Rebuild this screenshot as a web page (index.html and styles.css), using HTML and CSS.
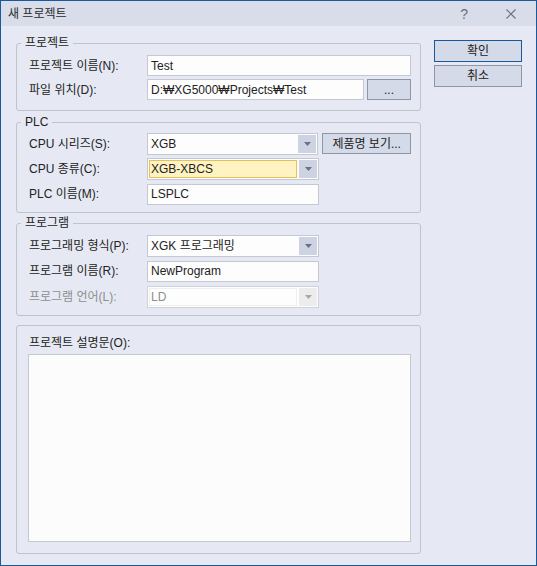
FILE: index.html
```html
<!DOCTYPE html>
<html lang="ko">
<head>
<meta charset="utf-8">
<title>새 프로젝트</title>
<link rel="stylesheet" href="styles.css">
</head>
<body>
<div class="window">
  <div class="titlebar">
    <span class="title">새 프로젝트</span>
    <span class="help">?</span>
    <svg class="close" width="10" height="10" viewBox="0 0 10 10"><path d="M0.5 0.5 L9.5 9.5 M9.5 0.5 L0.5 9.5" stroke="#6a6f78" stroke-width="1.1" fill="none"/></svg>
  </div>
  <div class="content">
    <div class="left">
      <div class="group g1">
        <span class="group-title">프로젝트</span>
        <div class="row">
          <span class="label">프로젝트 이름(N):</span>
          <input class="edit wide" type="text" value="Test">
        </div>
        <div class="row r2">
          <span class="label">파일 위치(D):</span>
          <input class="edit path" type="text" value="D:₩XG5000₩Projects₩Test">
          <button class="btn browse">...</button>
        </div>
      </div>

      <div class="group g2">
        <span class="group-title">PLC</span>
        <div class="row">
          <span class="label">CPU 시리즈(S):</span>
          <div class="combo"><span class="combo-text">XGB</span><span class="combo-btn"><svg width="7" height="4" viewBox="0 0 7 4"><path d="M0 0 H7 L3.5 4 Z" fill="#6c7282"/></svg></span></div>
          <button class="btn product">제품명 보기...</button>
        </div>
        <div class="row r2">
          <span class="label">CPU 종류(C):</span>
          <div class="combo"><span class="combo-text focused">XGB-XBCS</span><span class="combo-btn"><svg width="7" height="4" viewBox="0 0 7 4"><path d="M0 0 H7 L3.5 4 Z" fill="#6c7282"/></svg></span></div>
        </div>
        <div class="row r3">
          <span class="label">PLC 이름(M):</span>
          <input class="edit mid" type="text" value="LSPLC">
        </div>
      </div>

      <div class="group g3">
        <span class="group-title">프로그램</span>
        <div class="row">
          <span class="label">프로그래밍 형식(P):</span>
          <div class="combo"><span class="combo-text">XGK 프로그래밍</span><span class="combo-btn"><svg width="7" height="4" viewBox="0 0 7 4"><path d="M0 0 H7 L3.5 4 Z" fill="#6c7282"/></svg></span></div>
        </div>
        <div class="row r2">
          <span class="label">프로그램 이름(R):</span>
          <input class="edit mid" type="text" value="NewProgram">
        </div>
        <div class="row r3b">
          <span class="label disabled">프로그램 언어(L):</span>
          <div class="combo disabled"><span class="combo-text">LD</span><span class="combo-btn"><svg width="7" height="4" viewBox="0 0 7 4"><path d="M0 0 H7 L3.5 4 Z" fill="#a8a8a8"/></svg></span></div>
        </div>
      </div>

      <div class="group g4">
        <div class="desc-label">프로젝트 설명문(O):</div>
        <textarea class="desc"></textarea>
      </div>
    </div>
    <div class="right">
      <button class="btn action default">확인</button>
      <button class="btn action">취소</button>
    </div>
  </div>
</div>
</body>
</html>
```

FILE: styles.css
```css
* { box-sizing: border-box; }
html, body { margin: 0; padding: 0; }
body {
  width: 537px;
  height: 566px;
  font-family: "Liberation Sans", "Noto Sans CJK KR", sans-serif;
  font-size: 12px;
  color: #222222;
  background: #e6e9f3;
}
.window {
  width: 537px;
  height: 566px;
  border: 1px solid #17599b;
  background: #e6e9f3;
  display: flex;
  flex-direction: column;
}
.titlebar {
  height: 25px;
  background: #d8dde9;
  display: flex;
  align-items: center;
  padding-left: 7px;
}
.title {
  font-size: 12px;
  line-height: 14px;
  color: #2a2a2a;
  flex: 1;
}
.help {
  font-size: 14px;
  color: #6a6f78;
  line-height: 14px;
  margin-right: 38px;
}
.close {
  margin-right: 20px;
}
.content {
  display: flex;
  padding-left: 15px;
}
.left {
  width: 405px;
  padding-top: 17px;
}
.right {
  width: 88px;
  margin-left: 13px;
  padding-top: 14px;
  display: flex;
  flex-direction: column;
  gap: 3px;
}
.group {
  position: relative;
  border: 1px solid #bfc3cc;
  border-radius: 3px;
  padding: 0 9px 0 12px;
}
.group-title {
  position: absolute;
  top: -8px;
  left: 4px;
  padding: 0 4px;
  background: #e6e9f3;
  line-height: 14px;
  color: #222222;
}
.g1 { padding-top: 11px; padding-bottom: 10px; }
.g2 { margin-top: 11px; padding-top: 10px; padding-bottom: 7px; }
.g3 { margin-top: 10px; padding-top: 11px; padding-bottom: 7px; }
.g4 { margin-top: 9px; padding: 9px 9px 11px 11px; }
.row {
  display: flex;
  align-items: center;
  height: 22px;
}
.row.r2 { margin-top: 3px; }
.row.r3 { margin-top: 3px; }
.row.r3b { margin-top: 4px; }
.g1 .row { height: 21px; }
.label {
  width: 118px;
  flex: none;
  white-space: nowrap;
  line-height: 14px;
}
.label.disabled { color: #8e8e8e; }
.edit {
  height: 21px;
  border: 1px solid #c4c8d0;
  background: #fdfdfd;
  padding: 0 3px;
  margin: 0;
  font: inherit;
  color: #222222;
  outline: none;
  border-radius: 0;
}
.edit.wide { width: 264px; }
.edit.path { width: 217px; }
.edit.mid { width: 172px; }
.combo {
  width: 172px;
  height: 22px;
  border: 1px solid #c4c8d0;
  background: #fdfdfd;
  padding: 1px;
  display: flex;
}
.combo-text {
  flex: 1;
  margin-right: 2px;
  border: 1px solid transparent;
  padding-left: 1px;
  line-height: 16px;
  white-space: nowrap;
}
.combo-text.focused {
  background: #fff3c2;
  border-color: #e5c15b;
}
.combo-btn {
  width: 18px;
  background: #cdd3e2;
  display: flex;
  align-items: center;
  justify-content: center;
}
.combo.disabled { border-color: #cfd2d8; }
.combo.disabled .combo-text { color: #8e8e8e; border-color: #eeeeee; }
.combo.disabled .combo-btn { background: #ececec; }
.btn {
  font: inherit;
  color: #222222;
  background: #d4dae7;
  border: 1px solid #8e97a8;
  border-radius: 0;
  margin: 0;
  padding: 0;
  line-height: 14px;
}
.btn.browse {
  width: 44px;
  height: 21px;
  margin-left: 3px;
}
.btn.product {
  width: 89px;
  height: 21px;
  margin-left: 4px;
  align-self: flex-start;
}
.btn.action {
  height: 22px;
  width: 88px;
}
.btn.default { border-color: #17599b; }
.desc-label {
  line-height: 16px;
  padding-left: 1px;
}
.desc {
  display: block;
  margin: 3px 0 0 0;
  width: 383px;
  height: 188px;
  border: 1px solid #c4c8d0;
  background: #fcfcfc;
  resize: none;
  outline: none;
}
```
